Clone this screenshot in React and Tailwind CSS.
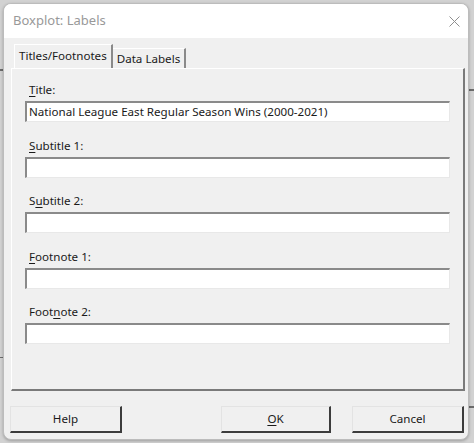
const font = { fontFamily: '"Noto Sans", "Open Sans", sans-serif' };

function Field({ before, hot, after, value }) {
  return (
    <div className="flex flex-col">
      <div className="ml-[4px] h-[18px] text-[11.6px] leading-[18px] text-[#1a1a1a]">
        {before}
        <span className="underline underline-offset-2">{hot}</span>
        {after}
      </div>
      <div className="mt-[2px] h-[21px] w-[425px] border-l-[2px] border-t-[2px] border-b border-r border-l-[#8a8a8a] border-t-[#8a8a8a] border-b-[#e8e8e8] border-r-[#e8e8e8] bg-white pl-[2px] text-[11.6px] leading-[17px] text-[#1a1a1a]">
        {value}
      </div>
    </div>
  );
}

function Button({ children, width }) {
  return (
    <button
      type="button"
      className={`h-[27px] ${width} border-t border-l border-r-[2px] border-b-[2px] border-t-[#e3e3e3] border-l-[#e3e3e3] border-r-[#3c3c3c] border-b-[#3c3c3c] bg-[#f0f0f0] text-[11.6px] text-[#1a1a1a]`}
    >
      {children}
    </button>
  );
}

export default function App() {
  return (
    <div className="relative h-[443px] w-[474px] overflow-hidden bg-[#d2d2d2]" style={font}>
      <div className="absolute left-0 top-[69px] h-[2px] w-[3px] bg-[#6b6b6b]" />
      <div className="absolute left-0 top-[357px] h-[1px] w-[3px] bg-[#6b6b6b]" />
      <div className="absolute right-0 top-[89px] h-[2px] w-[6px] bg-[#6b6b6b]" />
      <div className="absolute right-0 top-[406px] h-[2px] w-[6px] bg-[#6b6b6b]" />

      <div className="relative ml-[3px] mt-[3px] flex h-[437px] w-[466px] flex-col overflow-hidden rounded-[8px] border border-[#bcbcbc] bg-[#f0f0f0] shadow-[0_1px_3px_rgba(0,0,0,0.25)]">
        <div className="flex h-[34px] shrink-0 items-center justify-between bg-white pl-[9px] pr-[8px]">
          <span className="text-[13px] text-[#999999]">Boxplot: Labels</span>
          <svg width="11" height="11" viewBox="0 0 11 11">
            <path d="M0.5 0.5 L10.5 10.5 M10.5 0.5 L0.5 10.5" stroke="#8f8f8f" strokeWidth="1" />
          </svg>
        </div>

        <div className="flex flex-col px-[7px] pt-[6px]">
          <div className="flex items-end pl-[3px]">
            <div className="h-[24px] border-l border-t border-r-[2px] border-l-white border-t-white border-r-[#8a8a8a] bg-[#f0f0f0] px-[4px] text-[11.6px] leading-[22px] text-[#1a1a1a]">
              Titles/Footnotes
            </div>
            <div className="h-[20px] border-t border-r-[2px] border-t-white border-r-[#8a8a8a] px-[4px] text-[11.6px] leading-[20px] text-[#1a1a1a]">
              Data Labels
            </div>
          </div>
          <div className="flex h-[323px] w-[454px] flex-col gap-y-[14.5px] border-l border-t border-r-[2px] border-b-[2px] border-l-white border-t-white border-r-[#7a7a7a] border-b-[#7a7a7a] pl-[13px] pt-[12px]">
            <Field hot="T" after="itle:" value="National League East Regular Season Wins (2000-2021)" />
            <Field hot="S" after="ubtitle 1:" />
            <Field before="S" hot="u" after="btitle 2:" />
            <Field hot="F" after="ootnote 1:" />
            <Field before="Foot" hot="n" after="ote 2:" />
          </div>
        </div>

        <div className="mt-[15px] flex items-start justify-between pl-[6px] pr-[4px]">
          <Button width="w-[112px]">Help</Button>
          <div className="flex gap-[21px]">
            <Button width="w-[110px]">
              <span className="underline underline-offset-2">O</span>K
            </Button>
            <Button width="w-[112px]">Cancel</Button>
          </div>
        </div>
      </div>
    </div>
  );
}
